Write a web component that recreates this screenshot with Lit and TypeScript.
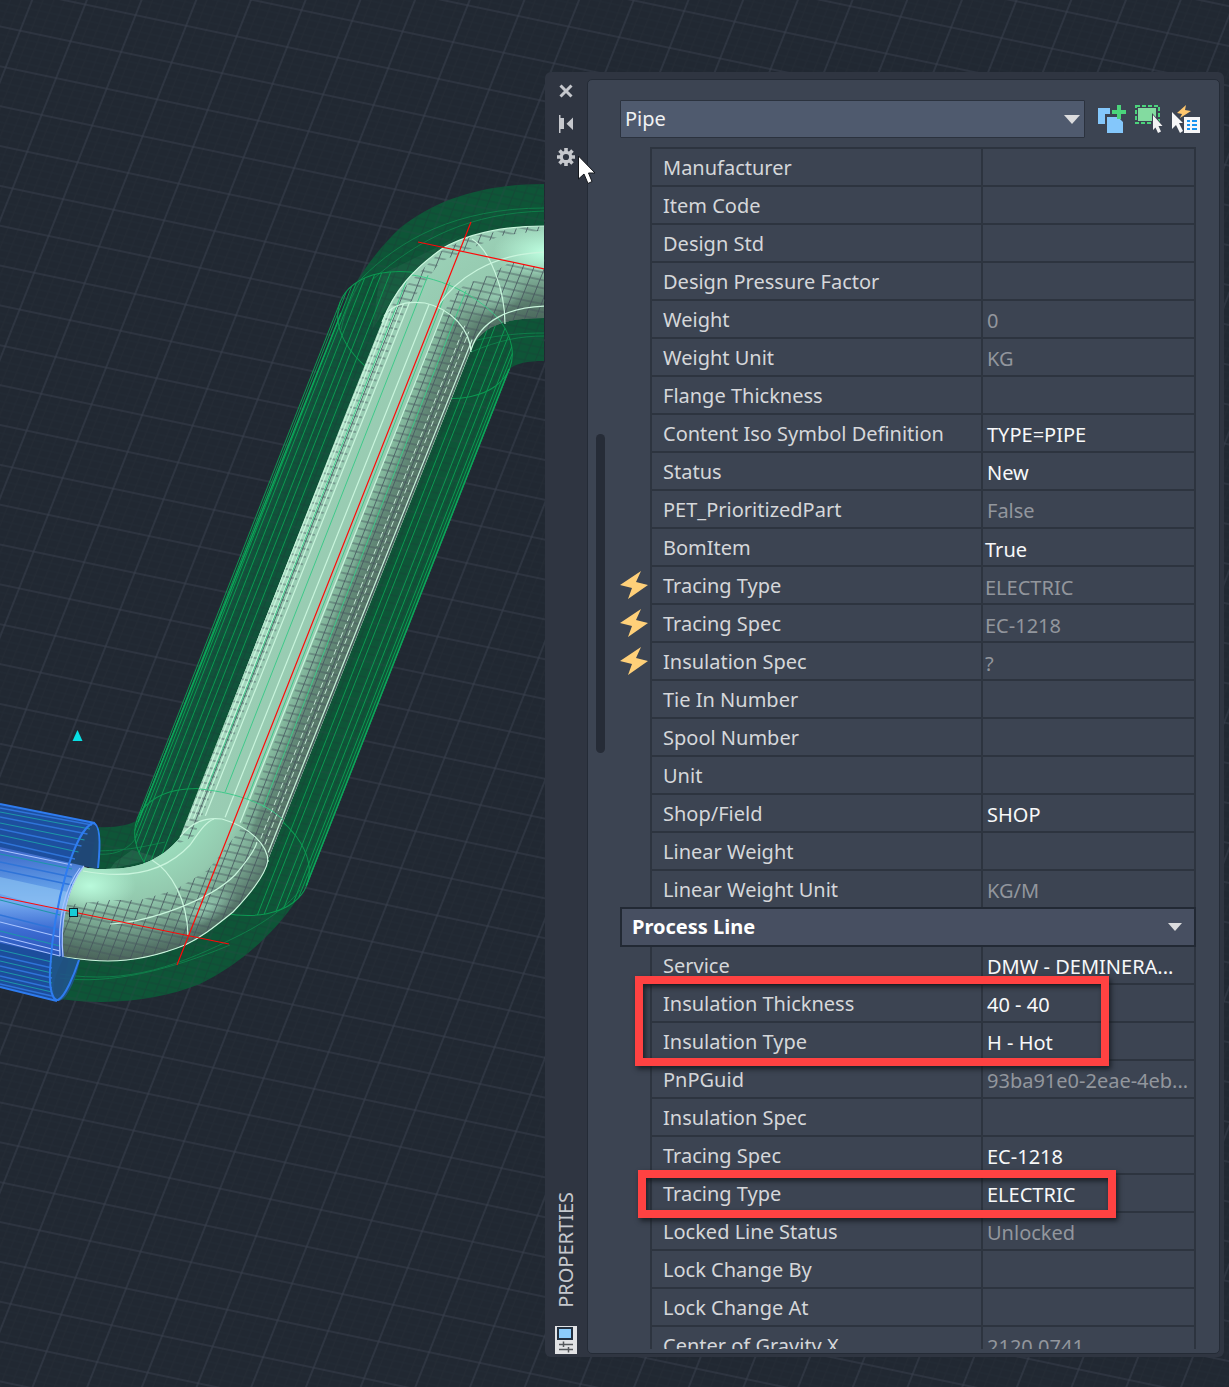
import { LitElement, html, css, svg, nothing } from "lit";
import { customElement } from "lit/decorators.js";

type Tone = "edit" | "locked";

interface Row {
  label: string;
  value?: string;
  tone?: Tone;
  linked?: boolean;
  combo?: boolean;
}

const GENERAL: Row[] = [
  { label: "Manufacturer" },
  { label: "Item Code" },
  { label: "Design Std" },
  { label: "Design Pressure Factor" },
  { label: "Weight", value: "0", tone: "locked" },
  { label: "Weight Unit", value: "KG", tone: "locked" },
  { label: "Flange Thickness" },
  { label: "Content Iso Symbol Definition", value: "TYPE=PIPE" },
  { label: "Status", value: "New" },
  { label: "PET_PrioritizedPart", value: "False", tone: "locked" },
  { label: "BomItem", value: "True", combo: true },
  { label: "Tracing Type", value: "ELECTRIC", tone: "locked", linked: true, combo: true },
  { label: "Tracing Spec", value: "EC-1218", tone: "locked", linked: true, combo: true },
  { label: "Insulation Spec", value: "?", tone: "locked", linked: true, combo: true },
  { label: "Tie In Number" },
  { label: "Spool Number" },
  { label: "Unit" },
  { label: "Shop/Field", value: "SHOP" },
  { label: "Linear Weight" },
  { label: "Linear Weight Unit", value: "KG/M", tone: "locked" },
];

const PROCESS_LINE: Row[] = [
  { label: "Service", value: "DMW - DEMINERA..." },
  { label: "Insulation Thickness", value: "40 - 40" },
  { label: "Insulation Type", value: "H - Hot" },
  { label: "PnPGuid", value: "93ba91e0-2eae-4eb...", tone: "locked" },
  { label: "Insulation Spec" },
  { label: "Tracing Spec", value: "EC-1218" },
  { label: "Tracing Type", value: "ELECTRIC" },
  { label: "Locked Line Status", value: "Unlocked", tone: "locked" },
  { label: "Lock Change By" },
  { label: "Lock Change At" },
  { label: "Center of Gravity X", value: "2120.0741", tone: "locked" },
];

/* Axis of the sloped pipe run, pointing up and to the right, and its normal. */
const AXIS = { x: 0.3655, y: -0.9308 };
const NORMAL = { x: 0.9308, y: 0.3655 };

/* A line along the run, s from the axis, ending on the joint ellipses (a, b). */
const runLine = (
  s: number, a: number, b: number,
  lo: [number, number], hi: [number, number], cls: string, lowSign = -1,
) => {
  const k = b * Math.sqrt(Math.max(0, 1 - (s * s) / (a * a)));
  const x1 = lo[0] + NORMAL.x * s + AXIS.x * k * lowSign;
  const y1 = lo[1] + NORMAL.y * s + AXIS.y * k * lowSign;
  const x2 = hi[0] + NORMAL.x * s + AXIS.x * k;
  const y2 = hi[1] + NORMAL.y * s + AXIS.y * k;
  return svg`<line class=${cls} x1=${x1} y1=${y1} x2=${x2} y2=${y2} />`;
};

@customElement("model-view")
export class ModelView extends LitElement {
  static styles = css`
    :host { display: block; overflow: hidden; background: #212832; }
    svg { display: block; width: 100%; height: 100%; }
    .major { stroke: #39404d; stroke-width: 2; }
    .minor { stroke: #242b35; stroke-width: 2; }
    .hatch-line { stroke: #44535c; stroke-width: 1.7; }
    .ins-line { stroke: #0c9a52; stroke-width: 1; fill: none; }
    .ins-edge { stroke: #0da65a; stroke-width: 1.4; fill: none; }
    .ins-soft { stroke: #0f7d49; stroke-width: 1; fill: none; }
    .ins-over { stroke: #3fc98a; stroke-width: 1; fill: none; }
    .pipe-line { stroke: #c9f5dd; stroke-width: 1.2; fill: none; }
    .pipe-dash { stroke: #c2e3d2; stroke-width: 1; stroke-dasharray: 6 3; fill: none; }
    .center { stroke: #ff0808; stroke-width: 1.2; }
    .sel { stroke: #2e7cf0; stroke-width: 2; fill: none; }
    .sel-thin { stroke: #2f74d8; stroke-width: 1.4; }
    .sel-teal { stroke: #1d96a8; stroke-width: 1.2; }
    .sel-pale { stroke: #a9c4ff; stroke-width: 1.2; }
  `;

  render() {
    const gLo: [number, number] = [222, 852];
    const gHi: [number, number] = [425, 335];
    const pLo: [number, number] = [223, 850];
    const pHi: [number, number] = [427, 337];
    const run = "M347 410L382 322C395 290 412 270 443 248C470 233 505 226 545 226V318C520 318 500 321 487 330C478 337 474 342 471 350L268 860C266 874 252 892 233 912C212 929 200 938 185 945C160 955 135 961 108 961C92 961 78 959 63 957C60 925 68 888 83 867C92 869 98 869 105 869C125 869 140 866 152 860C163 854 168 850 173 845C177 841 179 839 180 837Z";
    const shell = "M341 313C352 285 372 255 400 228C440 196 490 184 545 184V361C528 361 517 363 509 369L493 410L314 864C302 905 256 957 200 984C160 1000 110 1006 60 999L98 827C115 828 130 825 138 820Z";
    return html`
      <svg role="img" aria-label="Insulated pipe model">
        <defs>
          <pattern id="grid" width="100" height="100" patternUnits="userSpaceOnUse"
            patternTransform="matrix(.505 .1063 -.145 .368 70.6 41.3)">
            ${[20, 40, 60, 80].map((n) => svg`<path class="minor" d="M${n} 0V100M0 ${n}H100" />`)}
            <path class="major" d="M0 0V100M100 0V100M0 0H100M0 100H100" />
          </pattern>
          <pattern id="hatch" width="20" height="20" patternUnits="userSpaceOnUse"
            patternTransform="matrix(.505 .1063 -.145 .368 70.6 41.3)">
            <path class="hatch-line" d="M10 0V20M0 10H20" />
          </pattern>
          <linearGradient id="run" gradientUnits="userSpaceOnUse" x1="310" y1="500" x2="396" y2="534">
            <stop offset="0" stop-color="#b2e3ca" />
            <stop offset=".14" stop-color="#9acdb4" />
            <stop offset=".58" stop-color="#98cbb1" />
            <stop offset=".6" stop-color="#86ba9f" />
            <stop offset=".7" stop-color="#7aab93" />
            <stop offset=".74" stop-color="#668f7c" />
            <stop offset="1" stop-color="#567366" />
          </linearGradient>
          <radialGradient id="upper" gradientUnits="userSpaceOnUse" cx="548" cy="405" r="184">
            <stop offset=".46" stop-color="#4b685c" />
            <stop offset=".56" stop-color="#587a6b" />
            <stop offset=".68" stop-color="#7aa791" />
            <stop offset=".77" stop-color="#96cab0" />
            <stop offset="1" stop-color="#9ad0b6" />
          </radialGradient>
          <radialGradient id="lower" gradientUnits="userSpaceOnUse" cx="118" cy="770" r="192">
            <stop offset=".48" stop-color="#9bdcbc" />
            <stop offset=".68" stop-color="#93c9ae" />
            <stop offset=".82" stop-color="#76a28d" />
            <stop offset=".93" stop-color="#56766a" />
            <stop offset="1" stop-color="#4a6359" />
          </radialGradient>
          <radialGradient id="shine">
            <stop offset="0" stop-color="#bdffe0" />
            <stop offset="1" stop-color="#bdffe0" stop-opacity="0" />
          </radialGradient>
          <linearGradient id="sel" x1="0" y1="0" x2="0" y2="1">
            <stop offset="0" stop-color="#3b66c8" />
            <stop offset=".35" stop-color="#5f9be6" />
            <stop offset=".5" stop-color="#76aaf0" />
            <stop offset=".75" stop-color="#3c6cd2" />
            <stop offset="1" stop-color="#2a55b8" />
          </linearGradient>
          <clipPath id="pipe"><path d=${run} /></clipPath>
          <clipPath id="view"><path d="M0 0H544V1500H0Z" /></clipPath>
        </defs>

        <rect width="100%" height="100%" fill="url(#grid)" />

        <g clip-path="url(#view)">
          <path fill="#0e5738" fill-opacity=".95" d=${shell} />
          <path fill="#10533a" d="M341 313L138 820C132 850 142 866 160 870L390 330Z" />
          <path fill="#1d6144" fill-opacity=".7" d="M380 275L460 236L440 250L395 295L372 330Z" />
          <path fill="#3c8163" fill-opacity=".35" d="M115 862L132 850L160 858L110 869Z" />
          <g opacity=".3"><path fill="url(#grid)" d=${shell} /></g>

          <path class="ins-soft" d="M362 278C400 240 455 208 545 208M372 280C420 238 470 213 545 211M362 278C350 300 345 310 341 330" />
          <path class="ins-soft" d="M477 340C500 335 520 333 545 333M471 352C500 340 520 336 545 336" />
          <path class="ins-soft" d="M98 854C120 856 133 845 138 834M98 851C120 850 130 850 165 842M60 974C130 985 180 965 240 935C270 920 290 903 300 890M60 978C110 985 170 970 230 945" />

          <g>
            ${[-91, -89, -86, -83, -77, -69, -63, -55].map((s) => runLine(s, 91, 58, gLo, gHi, "ins-line"))}
            ${[56, 62, 72, 78, 85, 88, 91].map((s) => runLine(s, 91, 58, gLo, gHi, "ins-line"))}
          </g>
          <ellipse class="ins-line" cx="222" cy="852" rx="91" ry="58" transform="rotate(21.4 222 852)" />
          <ellipse class="ins-line" cx="425" cy="335" rx="91" ry="58" transform="rotate(21.4 425 335)" />
          <path class="ins-edge" d="M341 313L138 822M509 369L306 886" />

          <g clip-path="url(#pipe)">
            <rect x="50" y="200" width="500" height="780" fill="url(#run)" />
            <path fill="url(#upper)" d="M360 322C395 298 418 300 440 306C462 318 471 335 471 352L545 330V200H380Z" />
            <path fill="url(#lower)" d="M50 850H165L182 835C195 820 208 817 222 819C248 826 266 842 268 862V980H50Z" />
            <ellipse cx="545" cy="252" rx="52" ry="26" fill="url(#shine)" />
            <ellipse cx="497" cy="296" rx="34" ry="17" transform="rotate(-25 497 296)" fill="url(#shine)" opacity=".45" />
            <ellipse cx="90" cy="886" rx="46" ry="27" fill="url(#shine)" opacity=".9" />
            <ellipse cx="205" cy="908" rx="36" ry="15" transform="rotate(-28 205 908)" fill="url(#shine)" opacity=".5" />

            <path fill="url(#hatch)" d="M382 322L400 292L440 252L470 236L545 224V230L500 236L440 262L405 310L194 836L176 845Z" />
            <path fill="url(#hatch)" d="M464 285L490 275L510 262L545 268V330L471 350L268 862L240 905L185 950L100 965L60 960L66 905L110 900L140 900L175 890L208 870L240 830L428 350L450 300Z" />

            ${[-46, -43, -39, -34, -29].map((s) => runLine(s, 48, 32, pLo, pHi, "pipe-line", 1))}
            ${[-10, 6].map((s) => runLine(s, 48, 32, pLo, pHi, "pipe-line", 1))}
            ${[-37, -19, 4, 22].map((s) => runLine(s, 91, 58, gLo, gHi, "ins-over", 1))}
            ${[31, 37].map((s) => runLine(s, 48, 32, pLo, pHi, "pipe-dash", 1))}
            ${[43, 46].map((s) => runLine(s, 48, 32, pLo, pHi, "pipe-line", 1))}
            <path class="ins-over" d="M389 273C440 274 480 296 503 324M200 789C240 793 270 806 283 820" />
          </g>
          <path class="pipe-line" d="M384 316C394 303 410 301 425 303C452 309 470 330 471 352M180 837C192 822 205 817 222 819C250 827 268 845 268 862" />
          <path class="pipe-line" d="M472 239C490 250 505 290 505 324M438 306C455 280 490 254 545 252M471 350C480 320 510 307 545 306" />
          <path class="pipe-line" d="M152 860C172 872 187 900 188 935M83 871C130 880 165 872 190 845C198 834 205 822 214 819M110 924C150 922 210 900 235 875C248 860 255 850 257 842" />
          <path class="pipe-line" d="M382 322C395 290 412 270 443 248C470 233 505 226 545 226M268 860C266 874 252 892 233 912C212 929 200 938 185 945C160 955 135 961 108 961C92 961 78 959 64 957" />

          <path fill="#1d4f9f" d="M0 804L93 823C75 830 54 900 50 955L64 957L0 987Z" />
          <path fill="#1c4d9c" d="M0 940L64 957C58 970 49 985 57 1001L0 987Z" />
          <path fill="#1f4a7c" fill-opacity=".92" d="M93 823C101 830 100 850 98 869L83 866L60 905C66 865 80 828 93 823Z" />
          <path fill="#1f5587" fill-opacity=".92" d="M50 955L64 957L80 960C75 985 64 1003 57 1001C49 995 49 975 50 955Z" />
          <path fill="url(#sel)" d="M0 847L84 866C66 890 60 925 64 957L0 943Z" />
          <path fill="#8fc4f2" fill-opacity=".6" d="M0 877L68 892L64 912L0 894Z" />
          ${[808, 812, 817, 823, 829, 835, 842, 950, 956, 961, 966, 971, 976, 980, 984].map(
            (y, i) => svg`<line class=${i % 2 ? "sel-teal" : "sel-thin"} x1="0" y1=${y} x2=${y < 900 ? 92 - (y - 808) / 2 : 52} y2=${y + (y < 900 ? 17 : 12)} />`)}
          ${[850, 854, 862, 870, 900, 915, 922, 931, 936, 941].map(
            (y, i) => svg`<line class=${i % 3 === 1 ? "sel-teal" : i > 5 || i === 0 ? "sel-pale" : "sel-thin"} x1="0" y1=${y} x2=${y < 880 ? 72 : 60} y2=${y + 15} />`)}
          <path class="sel" d="M0 804L95 823M0 987L57 1001" />
          <path class="sel" d="M98 868C101 840 100 824 93 823C75 830 54 900 50 970C49 990 53 1001 58 1000C65 997 74 975 79 960" />
          <path class="sel-pale" fill="none" d="M84 866C66 888 60 925 63 957M80 868C62 892 58 925 60 956" />

          <path class="center" d="M177 965L471 222M418 242L545 269M0 897L229 944" />
        </g>
        <path fill="#08dfe4" d="M77.500 730L82.500 741H72.500Z" />
        <rect x="69.500" y="908.500" width="8" height="8" fill="#16cdd6" stroke="#10232b" />
      </svg>
    `;
  }
}

@customElement("properties-palette")
export class PropertiesPalette extends LitElement {
  static styles = css`
    :host {
      display: grid;
      grid-template-columns: 42px minmax(0, 1fr);
      box-sizing: border-box;
      padding: 7px 4px 3px 0;
      border-radius: 6px;
      background: #2f3541;
      color: #d5d7da;
      font: 20px/28px "Noto Sans", "Open Sans", sans-serif;
    }
    button { padding: 0; border: 0; background: none; color: inherit; cursor: pointer; }
    svg { display: block; }

    .rail { display: flex; flex-direction: column; align-items: center; color: #c6c8cd; }
    .rail button { display: grid; place-items: center; width: 24px; height: 33px; }
    .rail button:first-child { height: 24px; margin-bottom: 4px; }
    .title {
      margin: auto 0 18px;
      font-size: 20px;
      font-weight: 400;
      line-height: 24px;
      writing-mode: vertical-rl;
      transform: rotate(180deg);
    }

    .body {
      display: grid;
      grid-template-columns: 9px minmax(0, 1fr);
      column-gap: 15px;
      padding-left: 8px;
      border: 1px solid #242b36;
      border-radius: 5px;
      background: #3c4452;
      min-height: 0;
    }
    .track { display: grid; grid-template-rows: 354fr 318fr 600fr; }
    .thumb { grid-row: 2; border-radius: 5px; background: #262c37; }

    .content { display: flex; flex-direction: column; min-height: 0; padding: 20px 0 4px; }
    .toolbar { display: flex; align-items: center; gap: 9px; margin-right: 19px; }
    .combo { flex: 1; display: grid; align-items: center; margin-right: 4px; }
    .combo > * { grid-area: 1 / 1; }
    .combo select {
      height: 38px;
      width: 100%;
      padding: 0 4px;
      border: 1px solid #2b323e;
      border-radius: 1px;
      background: #4f5a6e;
      color: #f0f1f3;
      font: inherit;
      appearance: none;
    }
    .combo svg { justify-self: end; margin-right: 5px; pointer-events: none; }

    .list { position: relative; flex: 1; min-height: 0; overflow: hidden; margin: 9px 23px 0 0; }
    table { width: 100%; table-layout: fixed; border-collapse: separate; border-spacing: 0; }
    .col-mark { width: 30px; }
    .col-name { width: 331px; }
    th, td { box-sizing: border-box; height: 38px; padding: 0; text-align: left; font-weight: 400; }
    .mark svg { margin-top: 2px; }
    .name, .value {
      border-top: 2px solid #2d343f;
      border-left: 2px solid #2d343f;
      white-space: nowrap;
    }
    .name { padding: 1px 0 0 11px; }
    .value { padding: 3px 2px 0 4px; border-right: 2px solid #2d343f; color: #f7f8f9; }
    .value.combo-cell { padding: 6px 2px 0 2px; }
    .value.locked { color: #92969d; }
    .first .name, .first .value, .first .mark { height: 36px; border-top: 0; }
    .group {
      height: 40px;
      border: 2px solid #222934;
      background: #474f61;
      color: #fff;
      font-weight: 700;
    }
    .group button {
      display: flex;
      align-items: center;
      justify-content: space-between;
      width: 100%;
      height: 36px;
      padding: 0 12px 0 10px;
      font: inherit;
    }

    .callout {
      position: absolute;
      box-sizing: border-box;
      border: 8px solid #ff4242;
      box-shadow: 2px 3px 5px #12161ccc, inset 2px 3px 5px #12161ccc;
      pointer-events: none;
    }
    .thickness { left: 15px; top: 829px; width: 474px; height: 90px; }
    .tracing { left: 18px; top: 1023px; width: 478px; height: 48px; }
  `;

  private row(r: Row, first = false) {
    return html`<tr class=${first ? "first" : ""}>
      <td class="mark">${r.linked
        ? html`<svg width="28" height="28" viewBox="0 0 28 28" aria-hidden="true">
            <path fill="#ffd079" d="M21 0L0 14L12 17L8 28L28 14L16 11Z" /></svg>`
        : nothing}</td>
      <th class="name" scope="row">${r.label}</th>
      <td class="value ${r.tone ?? ""} ${r.combo ? "combo-cell" : ""}">${r.value ?? nothing}</td>
    </tr>`;
  }

  render() {
    return html`
      <div class="rail">
        <button aria-label="Close">
          <svg width="14" height="14" viewBox="0 0 14 14"><path d="M1.500 1.500L12.500 12.500M12.500 1.500L1.500 12.500" stroke="currentColor" stroke-width="3" /></svg>
        </button>
        <button aria-label="Auto-hide">
          <svg width="14" height="18" viewBox="0 0 14 18"><path fill="currentColor" d="M0 0H1.500V3H5V14H1.500V18H0ZM14 2.500V15L7.500 8.700Z" /></svg>
        </button>
        <button aria-label="Settings">
          <svg width="18" height="18" viewBox="0 0 18 18">
            <g stroke="currentColor" stroke-width="3.600"><path d="M9 0V4M9 14V18M0 9H4M14 9H18M2.500 2.500L5.400 5.400M12.600 12.600L15.500 15.500M15.500 2.500L12.600 5.400M5.400 12.600L2.500 15.500" /></g>
            <circle cx="9" cy="9" r="4.700" fill="none" stroke="currentColor" stroke-width="3.200" />
          </svg>
        </button>
        <h2 class="title">PROPERTIES</h2>
        <svg width="22" height="28" viewBox="0 0 22 28" aria-hidden="true">
          <rect width="22" height="28" fill="#e2e3e5" />
          <rect x="2" y="1" width="16" height="13" fill="#23303f" />
          <rect x="4" y="3" width="12" height="9" fill="#8ccdfc" />
          <path stroke="#55585c" stroke-width="1.500" d="M4 18.500H18M4 23.500H18M8.500 15.500V21M13.500 21V26.500" />
        </svg>
      </div>

      <div class="body">
        <div class="track"><div class="thumb"></div></div>
        <div class="content">
          <div class="toolbar">
            <div class="combo">
              <select aria-label="Object type"><option>Pipe</option></select>
              <svg width="16" height="9" viewBox="0 0 16 9" aria-hidden="true"><path fill="#dcdcde" d="M0 0H16L8 9Z" /></svg>
            </div>
            <button aria-label="Toggle PICKADD">
              <svg width="28" height="28" viewBox="0 0 28 28">
                <path fill="#84c7fb" d="M0 3H12V9H7V19H0ZM9 12H20L25 17V28H9Z" />
                <path fill="#4bd47b" d="M19 0H23V5H28V9H23V14H19V9H14V5H19Z" />
              </svg>
            </button>
            <button aria-label="Select objects">
              <svg width="28" height="28" viewBox="0 0 28 28">
                <rect x="1" y="1" width="23" height="17" fill="none" stroke="#4bd47b" stroke-width="2" stroke-dasharray="4 2" />
                <rect x="3" y="3" width="18" height="13" fill="#83dba0" />
                <path fill="#3c4452" d="M17 8L27 19L24 22H17Z" />
                <path fill="#f3f3f4" d="M18 10L27.500 21H23.500L26 26.500L23 28L20.500 22.500L18 25Z" />
              </svg>
            </button>
            <button aria-label="Quick select">
              <svg width="28" height="28" viewBox="0 0 28 28">
                <path fill="#ffc76d" d="M14 0L5 8L10 9L8 13L19 6L13 5Z" />
                <path fill="#f6f6f7" d="M0 7L11 18H7L11 26L8 28L4 20L0 24Z" />
                <rect x="12" y="12" width="16" height="16" fill="#f6f6f7" />
                <path fill="#1793f0" d="M15 15H18V17H15ZM20 15H25V17H20ZM15 19H18V21H15ZM20 19H25V21H20ZM15 23H18V25H15ZM20 23H25V25H20Z" />
              </svg>
            </button>
          </div>

          <div class="list">
            <table>
              <colgroup><col class="col-mark" /><col class="col-name" /><col /></colgroup>
              <tbody>
                ${GENERAL.map((r) => this.row(r))}
                <tr>
                  <th class="group" colspan="3" scope="colgroup">
                    <button aria-expanded="true">Process Line
                      <svg width="14" height="8" viewBox="0 0 14 8" aria-hidden="true"><path fill="#dcdcde" d="M0 0H14L7 8Z" /></svg>
                    </button>
                  </th>
                </tr>
                ${PROCESS_LINE.map((r, i) => this.row(r, i === 0))}
              </tbody>
            </table>
            <div class="callout thickness"></div>
            <div class="callout tracing"></div>
          </div>
        </div>
      </div>
    `;
  }
}

@customElement("app-root")
export class AppRoot extends LitElement {
  static styles = css`
    :host {
      display: grid;
      grid-template-columns: minmax(0, 545fr) minmax(0, 679fr);
      position: relative;
      box-sizing: border-box;
      height: 100vh;
      padding: 72px 5px 30px 0;
      overflow: hidden;
    }
    .model { position: absolute; inset: 0; }
    .palette { grid-column: 2; position: relative; min-height: 0; }
    .cursor { position: absolute; left: 578px; top: 155px; }
  `;

  render() {
    return html`
      <model-view class="model"></model-view>
      <properties-palette class="palette"></properties-palette>
      <svg class="cursor" width="20" height="30" viewBox="0 0 20 30" aria-hidden="true">
        <path fill="#fff" stroke="#15181d" d="M.500 1V24L6 19L10 28.500L14 26.500L10.500 18H17Z" />
      </svg>
    `;
  }
}
